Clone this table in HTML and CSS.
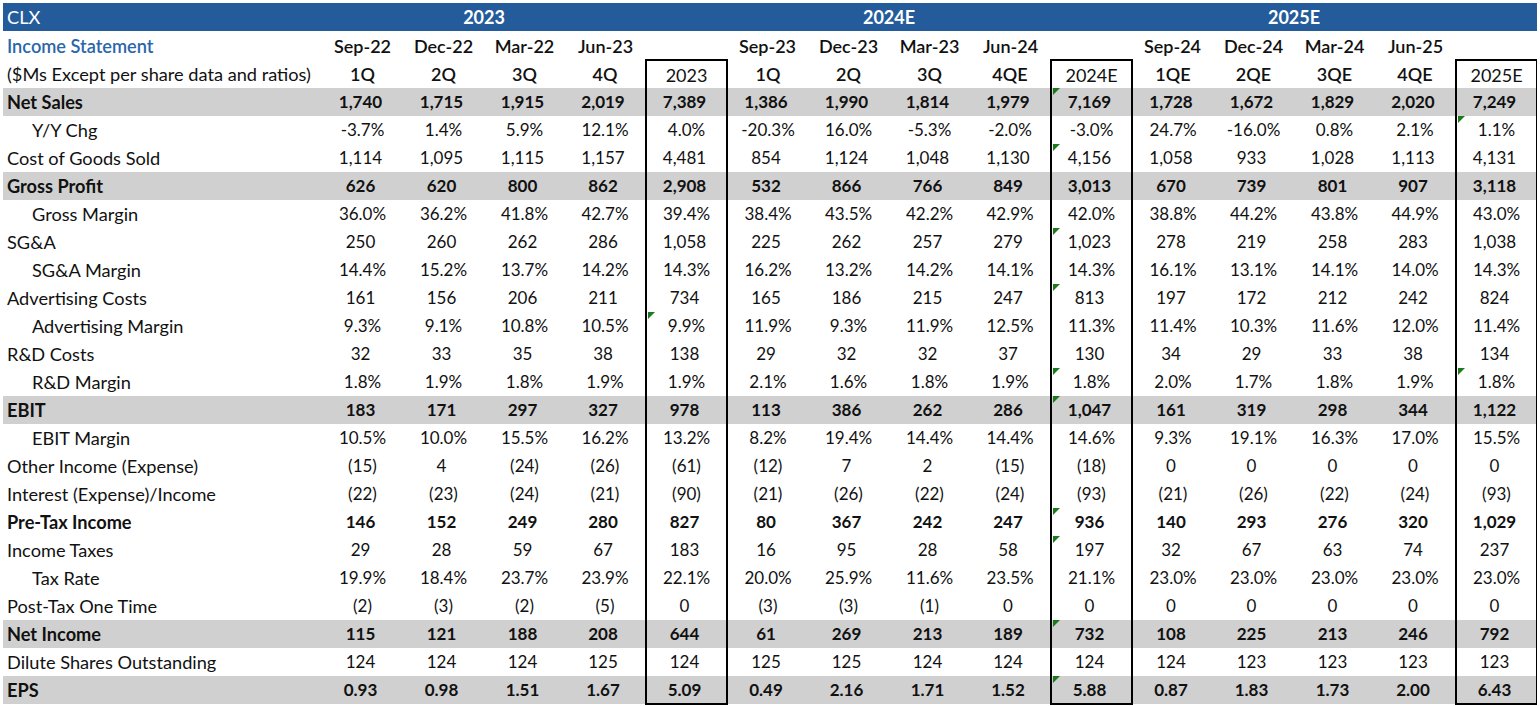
FILE: index.html
```html
<!DOCTYPE html>
<html lang="en">
<head>
<meta charset="utf-8">
<title>CLX Income Statement</title>
<link rel="stylesheet" href="styles.css">
</head>
<body>
<table class="sheet">
<colgroup><col class="c-label"><col span="15" class="c-num"></colgroup>
<tbody>
<tr class="hdr"><td class="lbl">CLX</td><td colspan="4" class="yr">2023</td><td></td><td colspan="4" class="yr">2024E</td><td></td><td colspan="4" class="yr">2025E</td><td></td></tr>
<tr class="mh"><td class="lbl title">Income Statement</td><td>Sep-22</td><td>Dec-22</td><td>Mar-22</td><td>Jun-23</td><td></td><td>Sep-23</td><td>Dec-23</td><td>Mar-23</td><td>Jun-24</td><td></td><td>Sep-24</td><td>Dec-24</td><td>Mar-24</td><td>Jun-25</td><td></td></tr>
<tr class="mh"><td class="lbl reg">($Ms Except per share data and ratios)</td><td>1Q</td><td>2Q</td><td>3Q</td><td>4Q</td><td class="reg">2023</td><td>1Q</td><td>2Q</td><td>3Q</td><td>4QE</td><td class="reg">2024E</td><td>1QE</td><td>2QE</td><td>3QE</td><td>4QE</td><td class="reg">2025E</td></tr>
<tr class="g n"><td class="lbl">Net Sales</td><td>1,740</td><td>1,715</td><td>1,915</td><td>2,019</td><td>7,389</td><td>1,386</td><td>1,990</td><td>1,814</td><td>1,979</td><td class="t">7,169</td><td>1,728</td><td>1,672</td><td>1,829</td><td>2,020</td><td>7,249</td></tr>
<tr><td class="lbl in">Y/Y Chg</td><td>-3.7%</td><td>1.4%</td><td>5.9%</td><td>12.1%</td><td>4.0%</td><td>-20.3%</td><td>16.0%</td><td>-5.3%</td><td>-2.0%</td><td>-3.0%</td><td>24.7%</td><td>-16.0%</td><td>0.8%</td><td>2.1%</td><td class="t">1.1%</td></tr>
<tr class="n"><td class="lbl">Cost of Goods Sold</td><td>1,114</td><td>1,095</td><td>1,115</td><td>1,157</td><td>4,481</td><td>854</td><td>1,124</td><td>1,048</td><td>1,130</td><td class="t">4,156</td><td>1,058</td><td>933</td><td>1,028</td><td>1,113</td><td>4,131</td></tr>
<tr class="g n"><td class="lbl">Gross Profit</td><td>626</td><td>620</td><td>800</td><td>862</td><td>2,908</td><td>532</td><td>866</td><td>766</td><td>849</td><td>3,013</td><td>670</td><td>739</td><td>801</td><td>907</td><td>3,118</td></tr>
<tr><td class="lbl in">Gross Margin</td><td>36.0%</td><td>36.2%</td><td>41.8%</td><td>42.7%</td><td>39.4%</td><td>38.4%</td><td>43.5%</td><td>42.2%</td><td>42.9%</td><td>42.0%</td><td>38.8%</td><td>44.2%</td><td>43.8%</td><td>44.9%</td><td>43.0%</td></tr>
<tr class="n"><td class="lbl">SG&amp;A</td><td>250</td><td>260</td><td>262</td><td>286</td><td>1,058</td><td>225</td><td>262</td><td>257</td><td>279</td><td class="t">1,023</td><td>278</td><td>219</td><td>258</td><td>283</td><td>1,038</td></tr>
<tr><td class="lbl in">SG&amp;A Margin</td><td>14.4%</td><td>15.2%</td><td>13.7%</td><td>14.2%</td><td>14.3%</td><td>16.2%</td><td>13.2%</td><td>14.2%</td><td>14.1%</td><td>14.3%</td><td>16.1%</td><td>13.1%</td><td>14.1%</td><td>14.0%</td><td>14.3%</td></tr>
<tr class="n"><td class="lbl">Advertising Costs</td><td>161</td><td>156</td><td>206</td><td>211</td><td>734</td><td>165</td><td>186</td><td>215</td><td>247</td><td class="t">813</td><td>197</td><td>172</td><td>212</td><td>242</td><td>824</td></tr>
<tr><td class="lbl in">Advertising Margin</td><td>9.3%</td><td>9.1%</td><td>10.8%</td><td>10.5%</td><td class="t">9.9%</td><td>11.9%</td><td>9.3%</td><td>11.9%</td><td>12.5%</td><td>11.3%</td><td>11.4%</td><td>10.3%</td><td>11.6%</td><td>12.0%</td><td>11.4%</td></tr>
<tr class="n"><td class="lbl">R&amp;D Costs</td><td>32</td><td>33</td><td>35</td><td>38</td><td>138</td><td>29</td><td>32</td><td>32</td><td>37</td><td>130</td><td>34</td><td>29</td><td>33</td><td>38</td><td>134</td></tr>
<tr><td class="lbl in">R&amp;D Margin</td><td>1.8%</td><td>1.9%</td><td>1.8%</td><td>1.9%</td><td>1.9%</td><td>2.1%</td><td>1.6%</td><td>1.8%</td><td>1.9%</td><td class="t">1.8%</td><td>2.0%</td><td>1.7%</td><td>1.8%</td><td>1.9%</td><td class="t">1.8%</td></tr>
<tr class="g n"><td class="lbl">EBIT</td><td>183</td><td>171</td><td>297</td><td>327</td><td>978</td><td>113</td><td>386</td><td>262</td><td>286</td><td class="t">1,047</td><td>161</td><td>319</td><td>298</td><td>344</td><td>1,122</td></tr>
<tr><td class="lbl in">EBIT Margin</td><td>10.5%</td><td>10.0%</td><td>15.5%</td><td>16.2%</td><td>13.2%</td><td>8.2%</td><td>19.4%</td><td>14.4%</td><td>14.4%</td><td>14.6%</td><td>9.3%</td><td>19.1%</td><td>16.3%</td><td>17.0%</td><td>15.5%</td></tr>
<tr class="n"><td class="lbl">Other Income (Expense)</td><td class="ng">(15)</td><td>4</td><td class="ng">(24)</td><td class="ng">(26)</td><td class="ng">(61)</td><td class="ng">(12)</td><td>7</td><td>2</td><td class="ng">(15)</td><td class="ng">(18)</td><td>0</td><td>0</td><td>0</td><td>0</td><td>0</td></tr>
<tr class="n"><td class="lbl">Interest (Expense)/Income</td><td class="ng">(22)</td><td class="ng">(23)</td><td class="ng">(24)</td><td class="ng">(21)</td><td class="ng">(90)</td><td class="ng">(21)</td><td class="ng">(26)</td><td class="ng">(22)</td><td class="ng">(24)</td><td class="ng">(93)</td><td class="ng">(21)</td><td class="ng">(26)</td><td class="ng">(22)</td><td class="ng">(24)</td><td class="ng">(93)</td></tr>
<tr class="b n"><td class="lbl">Pre-Tax Income</td><td>146</td><td>152</td><td>249</td><td>280</td><td>827</td><td>80</td><td>367</td><td>242</td><td>247</td><td class="t">936</td><td>140</td><td>293</td><td>276</td><td>320</td><td>1,029</td></tr>
<tr class="n"><td class="lbl">Income Taxes</td><td>29</td><td>28</td><td>59</td><td>67</td><td>183</td><td>16</td><td>95</td><td>28</td><td>58</td><td class="t">197</td><td>32</td><td>67</td><td>63</td><td>74</td><td>237</td></tr>
<tr><td class="lbl in">Tax Rate</td><td>19.9%</td><td>18.4%</td><td>23.7%</td><td>23.9%</td><td>22.1%</td><td>20.0%</td><td>25.9%</td><td>11.6%</td><td>23.5%</td><td>21.1%</td><td>23.0%</td><td>23.0%</td><td>23.0%</td><td>23.0%</td><td>23.0%</td></tr>
<tr class="n"><td class="lbl">Post-Tax One Time</td><td class="ng">(2)</td><td class="ng">(3)</td><td class="ng">(2)</td><td class="ng">(5)</td><td>0</td><td class="ng">(3)</td><td class="ng">(3)</td><td class="ng">(1)</td><td>0</td><td>0</td><td>0</td><td>0</td><td>0</td><td>0</td><td>0</td></tr>
<tr class="g n"><td class="lbl">Net Income</td><td>115</td><td>121</td><td>188</td><td>208</td><td>644</td><td>61</td><td>269</td><td>213</td><td>189</td><td class="t">732</td><td>108</td><td>225</td><td>213</td><td>246</td><td>792</td></tr>
<tr class="n"><td class="lbl">Dilute Shares Outstanding</td><td>124</td><td>124</td><td>124</td><td>125</td><td>124</td><td>125</td><td>125</td><td>124</td><td>124</td><td>124</td><td>124</td><td>123</td><td>123</td><td>123</td><td>123</td></tr>
<tr class="g n"><td class="lbl">EPS</td><td>0.93</td><td>0.98</td><td>1.51</td><td>1.67</td><td>5.09</td><td>0.49</td><td>2.16</td><td>1.71</td><td>1.52</td><td class="t">5.88</td><td>0.87</td><td>1.83</td><td>1.73</td><td>2.00</td><td>6.43</td></tr>
</tbody>
</table>
</body>
</html>
```

FILE: styles.css
```css
html, body {
  background: #ffffff;
}
body {
  margin: 3px;
  font-family: Lato, "Liberation Sans", sans-serif;
  font-size: 17px;
  color: #111111;
}
.sheet {
  border-collapse: collapse;
  table-layout: fixed;
  width: 1534px;
}
.c-label { width: 319px; }
.c-num { width: 81px; }
.sheet td {
  height: 28px;
  padding: 0;
  text-align: center;
  vertical-align: middle;
  white-space: nowrap;
  position: relative;
  line-height: 20px;
}
.sheet tr:nth-child(3) td,
.sheet tr:last-child td {
  height: 27px;
}
.sheet td.lbl {
  text-align: left;
  padding-left: 4px;
  font-size: 18.2px;
}
.sheet td.in {
  padding-left: 29px;
}
.hdr td,
.mh td {
  font-size: 18px;
}
.hdr td {
  background: #245c9b;
  color: #ffffff;
}
.hdr td.yr {
  font-weight: 700;
}
.mh td {
  font-weight: 600;
}
.mh td.reg {
  font-weight: 400;
}
.mh td.title {
  color: #2a66aa;
  font-weight: 600;
}
.g td {
  background: #d0d0d0;
  font-weight: 700;
}
.b td {
  font-weight: 700;
}
.n td:not(.lbl):not(.ng) {
  padding-right: 4px;
}
/* boxed annual columns */
.sheet tr:nth-child(n+3) td:nth-child(5n+1):not(:first-child) {
  border-left: 2px solid #000;
  border-right: 2px solid #000;
}
.sheet tr:nth-child(3) td:nth-child(5n+1):not(:first-child) {
  border-top: 2px solid #000;
}
.sheet tr:last-child td:nth-child(5n+1):not(:first-child) {
  border-bottom: 2px solid #000;
}
/* excel error indicator */
.sheet td.t::before {
  content: "";
  position: absolute;
  top: 0;
  left: 1px;
  width: 0;
  height: 0;
  border-top: 7px solid #1c7a1c;
  border-right: 7px solid transparent;
}
```
